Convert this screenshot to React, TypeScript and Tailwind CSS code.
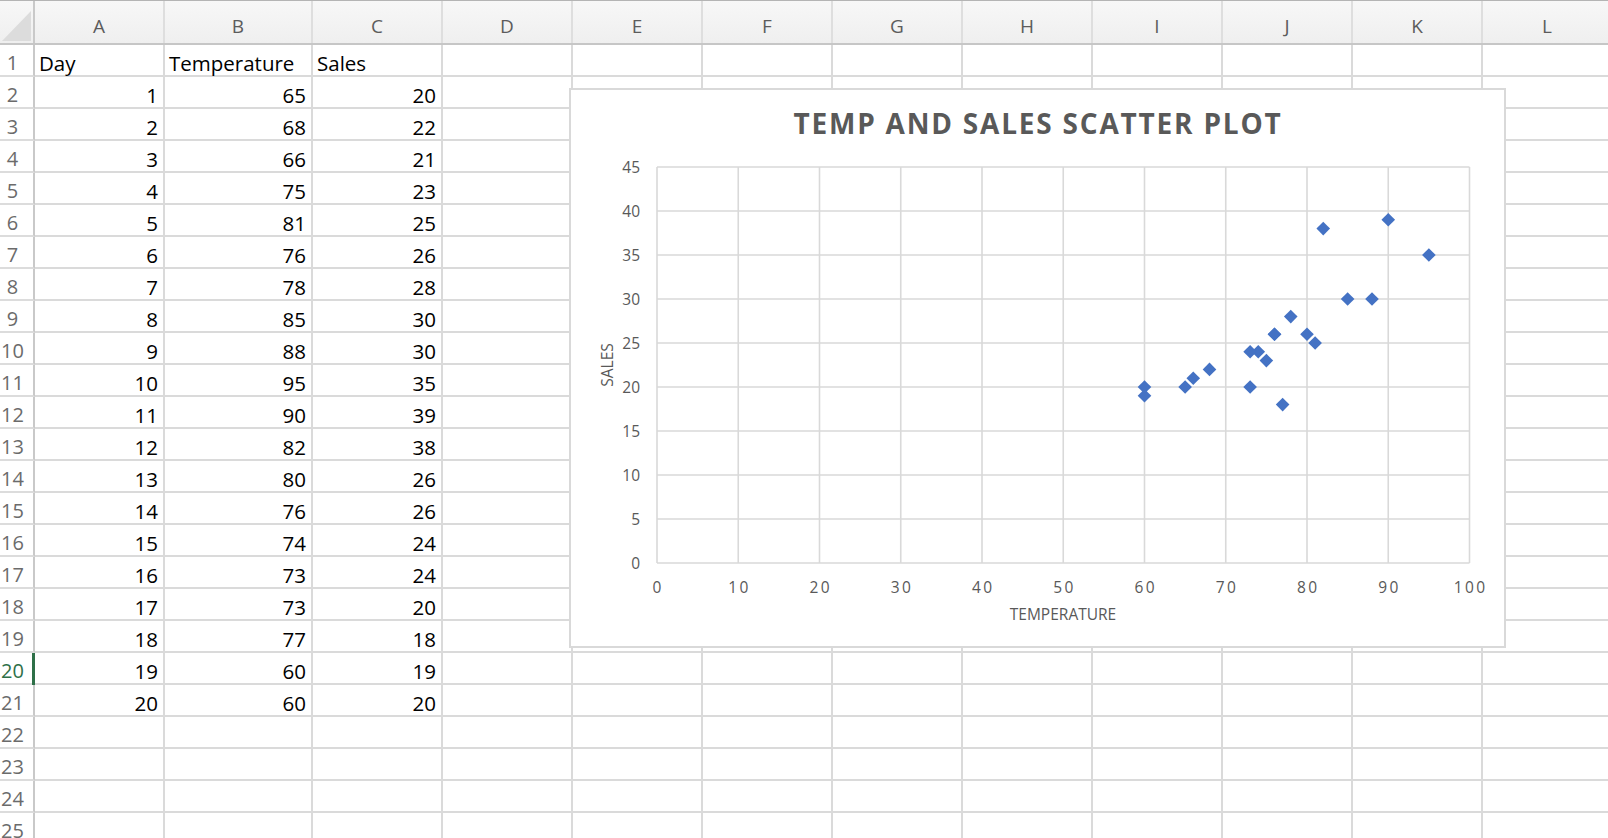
import React from "react";

const cols: { l: string; w: number }[] = [
  { l: "A", w: 130 },
  { l: "B", w: 148 },
  { l: "C", w: 130 },
  { l: "D", w: 130 },
  { l: "E", w: 130 },
  { l: "F", w: 130 },
  { l: "G", w: 130 },
  { l: "H", w: 130 },
  { l: "I", w: 130 },
  { l: "J", w: 130 },
  { l: "K", w: 130 },
  { l: "L", w: 130 },
];

const temps = [65, 68, 66, 75, 81, 76, 78, 85, 88, 95, 90, 82, 80, 76, 74, 73, 73, 77, 60, 60];
const sales = [20, 22, 21, 23, 25, 26, 28, 30, 30, 35, 39, 38, 26, 26, 24, 24, 20, 18, 19, 20];

function cellContent(row: number, col: number): { text: string; right: boolean } | null {
  if (row === 1) {
    const h = ["Day", "Temperature", "Sales"];
    if (col < 3) return { text: h[col], right: false };
    return null;
  }
  if (row >= 2 && row <= 21 && col < 3) {
    const i = row - 2;
    const v = col === 0 ? i + 1 : col === 1 ? temps[i] : sales[i];
    return { text: String(v), right: true };
  }
  return null;
}

function Chart() {
  const PL = 86;
  const PT = 77;
  const PW = 812.5;
  const PH = 396;
  const xs = Array.from({ length: 11 }, (_, i) => i);
  const ys = Array.from({ length: 10 }, (_, i) => i);
  return (
    <div className="absolute left-[569px] top-[88px] w-[937px] h-[560px] border-2 border-[#d9d9d9] bg-white">
      <svg width={933} height={556} viewBox="0 0 933 556" style={{ fontFamily: "'Open Sans', sans-serif" }}>
        {xs.map((i) => (
          <line
            key={"vx" + i}
            x1={PL + i * (PW / 10)}
            x2={PL + i * (PW / 10)}
            y1={PT}
            y2={PT + PH}
            stroke="#d9d9d9"
            strokeWidth={1.6}
          />
        ))}
        {ys.map((j) => (
          <line
            key={"hy" + j}
            x1={PL}
            x2={PL + PW}
            y1={PT + j * (PH / 9)}
            y2={PT + j * (PH / 9)}
            stroke="#d9d9d9"
            strokeWidth={1.6}
          />
        ))}
        {ys.map((j) => (
          <text
            key={"yl" + j}
            x={69}
            y={PT + PH - j * (PH / 9)}
            textAnchor="end"
            dominantBaseline="central"
            fontSize={15.5}
            fill="#595959"
          >
            {j * 5}
          </text>
        ))}
        {xs.map((i) => (
          <text
            key={"xl" + i}
            x={PL + i * (PW / 10) + 1.2}
            y={497}
            textAnchor="middle"
            dominantBaseline="central"
            fontSize={15.5}
            fill="#595959"
            letterSpacing={2.4}
          >
            {i * 10}
          </text>
        ))}
        <text x={492} y={524} textAnchor="middle" dominantBaseline="central" fontSize={15.5} fill="#595959">
          TEMPERATURE
        </text>
        <text
          x={35.5}
          y={275}
          textAnchor="middle"
          dominantBaseline="central"
          fontSize={15.5}
          fill="#595959"
          transform="rotate(-90 35.5 275)"
        >
          SALES
        </text>
        <text
          x={467}
          y={33}
          textAnchor="middle"
          dominantBaseline="central"
          fontSize={28}
          fontWeight={700}
          fill="#595959"
          letterSpacing={1.8}
        >
          TEMP AND SALES SCATTER PLOT
        </text>
        {temps.map((t, i) => {
          const cx = PL + t * (PW / 100);
          const cy = PT + PH - sales[i] * (PH / 45);
          const r = 6.8;
          return (
            <polygon
              key={"p" + i}
              points={`${cx},${cy - r} ${cx + r},${cy} ${cx},${cy + r} ${cx - r},${cy}`}
              fill="#4472c4"
            />
          );
        })}
      </svg>
    </div>
  );
}

export default function App() {
  const rows = Array.from({ length: 25 }, (_, i) => i + 1);
  return (
    <div className="relative w-[1608px] h-[838px] overflow-hidden bg-white font-['Open_Sans',sans-serif]">
      {/* column header */}
      <div className="flex h-[45px] border-t border-[#b4b4b4] bg-gradient-to-b from-[#f7f7f7] to-[#efefef] border-b-2 border-b-[#c6c6c6]">
        <div className="relative w-[35px] shrink-0 border-r-2 border-r-[#c9c9c9]">
          <svg className="absolute left-0 top-0" width={33} height={42} viewBox="0 0 33 42">
            <polygon points="2,40 31,40 31,10" fill="#dcdcdc" />
          </svg>
        </div>
        {cols.map((c) => (
          <div
            key={c.l}
            style={{ width: c.w }}
            className="shrink-0 flex items-end justify-center pb-[7px] border-r-2 border-r-[#dedede] text-[19px] leading-[19px] text-[#5c5c5c]"
          >
            {c.l}
          </div>
        ))}
      </div>
      {rows.map((r) => {
        const active = r === 20;
        return (
          <div key={r} className="flex h-[32px]">
            <div
              className={
                "relative w-[35px] shrink-0 border-r-2 border-b-2 border-b-[#dcdcdc] flex items-end pb-[2px] text-[20px] leading-[20px] " +
                (active ? "border-r-[#2e7048] text-[#2e7048]" : "border-r-[#c9c9c9] text-[#6b6b6b]")
              }
            >
              <span className="w-[25px] text-center">{r}</span>
              {active ? <div className="absolute right-[-2px] top-0 bottom-[-2px] w-[3px] bg-[#2e7048]" /> : null}
            </div>
            {cols.map((c, ci) => {
              const content = cellContent(r, ci);
              return (
                <div
                  key={c.l}
                  style={{ width: c.w }}
                  className={
                    "shrink-0 flex items-end pb-[2px] border-r-2 border-b-2 border-[#dadada] text-[20.5px] leading-[20px] text-black " +
                    (content && content.right ? "justify-end pr-[5px]" : "justify-start pl-[4px]")
                  }
                >
                  {content ? content.text : null}
                </div>
              );
            })}
          </div>
        );
      })}
      <Chart />
    </div>
  );
}
